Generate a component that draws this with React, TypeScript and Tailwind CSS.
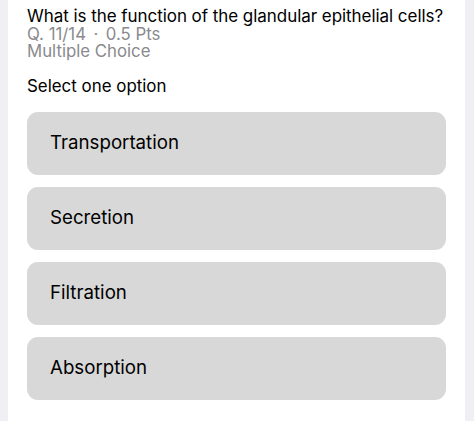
import React from "react";

const options = ["Transportation", "Secretion", "Filtration", "Absorption"];

export default function App() {
  return (
    <div
      className="flex h-[421px] w-[474px] overflow-hidden bg-[#efeff4] pl-[8px] pr-[9px]"
      style={{ fontFamily: "Inter, 'Liberation Sans', sans-serif" }}
    >
      <div className="flex flex-1 flex-col bg-white px-[19px] pt-[8px]">
        <h1 className="whitespace-nowrap text-[17px] leading-[17.5px] font-normal text-black tracking-[-0.05px]">
          What is the function of the glandular epithelial cells?
        </h1>
        <p className="text-[16.8px] leading-[17.5px] text-[#8a8a8e]">
          Q. 11/14<span className="mx-[7.5px]">·</span>0.5 Pts
        </p>
        <p className="text-[16.8px] leading-[17.5px] text-[#8a8a8e]">Multiple Choice</p>
        <p className="mt-[17.5px] text-[16.9px] leading-[17.5px] text-black">Select one option</p>
        <div className="mt-[16.5px] flex flex-col gap-[12px]">
          {options.map((o) => (
            <div
              key={o}
              className="flex h-[63px] items-center rounded-[11px] bg-[#d8d8d8] pl-[23px] text-[18.7px] text-black"
            >
              {o}
            </div>
          ))}
        </div>
      </div>
    </div>
  );
}
